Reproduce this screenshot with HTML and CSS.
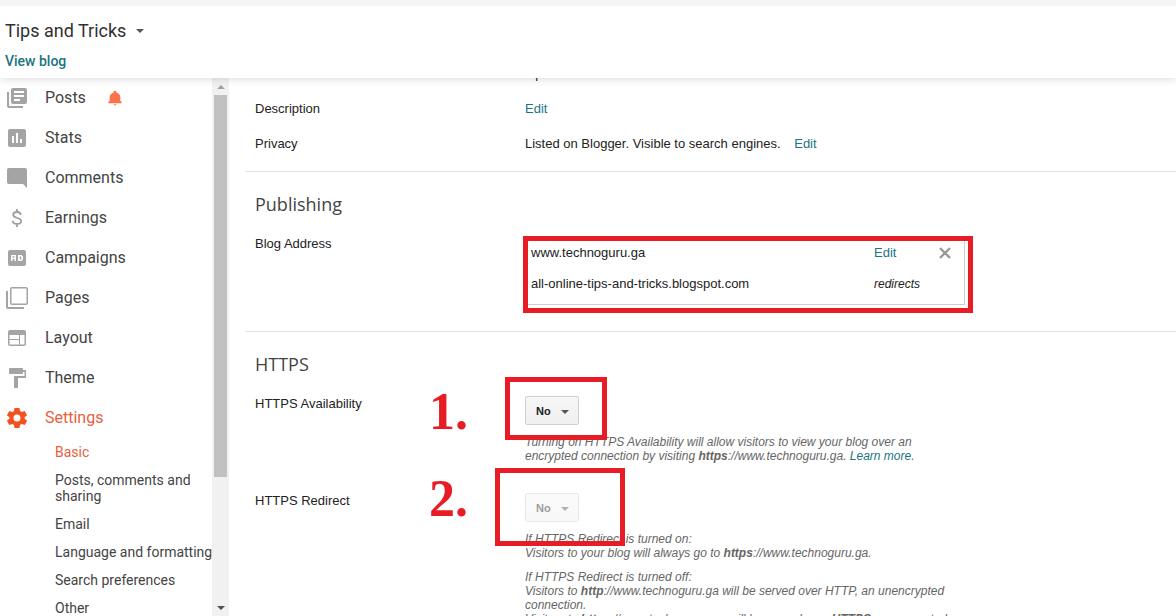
FILE: index.html
```
<!DOCTYPE html>
<html lang="en">

<head>
	<meta charset="utf-8">
	<title>Blogger: Tips and Tricks - Basic settings</title>
	<link rel="stylesheet" href="styles.css">
</head>

<body>

	<header class="topbar">
		<button type="button" class="blog-name">Tips and Tricks <span class="caret"></span></button>
		<a class="view-blog" href="#">View blog</a>
	</header>

	<div class="page">

		<nav class="sidebar">
			<ul class="menu">
				<li><a href="#">
					<svg class="icon" viewBox="0 0 24 24"><path d="M4 6H2v14c0 1.1.9 2 2 2h14v-2H4V6zm16-4H8c-1.1 0-2 .9-2 2v12c0 1.1.9 2 2 2h12c1.1 0 2-.9 2-2V4c0-1.1-.9-2-2-2zm-1 9H9V9h10v2zm-4 4H9v-2h6v2zm4-8H9V5h10v2z"/></svg>
					Posts
					<svg class="bell" viewBox="0 0 24 24"><path d="M12 23c1.200 0 2.200-.8 2.200-1.500H9.800c0 .7 1 1.500 2.200 1.500zM20 16v-5c0-3.600-2.500-6.400-6-7.200V3c0-1-.9-1.800-2-1.800S10 2 10 3v.8C6.500 4.600 4 7.400 4 11v5l-2 2.500v1.500h20v-1.500z"/></svg>
				</a></li>
				<li><a href="#">
					<svg class="icon" viewBox="0 0 24 24"><path d="M19 3H5c-1.100 0-2 .9-2 2v14c0 1.100.9 2 2 2h14c1.100 0 2-.9 2-2V5c0-1.100-.9-2-2-2zM9 17H7v-7h2v7zm4 0h-2V7h2v10zm4 0h-2v-4h2v4z"/></svg>
					Stats
				</a></li>
				<li><a href="#">
					<svg class="icon" viewBox="0 0 24 24"><path d="M22 4c0-1.100-.9-2-2-2H4c-1.100 0-2 .9-2 2v12c0 1.100.9 2 2 2h14l4 4z"/></svg>
					Comments
				</a></li>
				<li><a href="#">
					<svg class="icon" viewBox="0 0 24 24"><path d="M12 3v3M12 18v3M15.800 8.800C15.600 7 14.200 6 12 6 9.800 6 8.200 7.100 8.200 8.800c0 4.200 8 2.200 8 6.300 0 1.800-1.700 2.900-4.200 2.900-2.600 0-4.200-1.200-4.300-3.200" fill="none" stroke="currentColor" stroke-width="1.800"/></svg>
					Earnings
				</a></li>
				<li><a href="#">
					<svg class="icon" viewBox="0 0 24 24"><path fill-rule="evenodd" d="M5 4h14c1.100 0 2 .9 2 2v12c0 1.100-.9 2-2 2H5c-1.100 0-2-.9-2-2V6c0-1.100.9-2 2-2zM6 9v6h1.500v-2h2v2H11V9zm1.500 1.300h2v1.400h-2zM13 9v6h3.500l1.500-1.500v-3L16.500 9zm1.700 1.500h1.600v3h-1.600z"/></svg>
					Campaigns
				</a></li>
				<li><a href="#">
					<svg class="icon" viewBox="0 0 24 24"><path d="M3 5H1v16c0 1.100.9 2 2 2h16v-2H3V5zm18-4H7c-1.100 0-2 .9-2 2v14c0 1.100.9 2 2 2h14c1.100 0 2-.9 2-2V3c0-1.100-.9-2-2-2zm.5 16.500h-15v-15h15v15z"/></svg>
					Pages
				</a></li>
				<li><a href="#">
					<svg class="icon" viewBox="0 0 24 24"><path d="M19 4H5c-1.100 0-2 .9-2 2v12c0 1.100.9 2 2 2h14c1.100 0 2-.9 2-2V6c0-1.100-.9-2-2-2zm-5 14.500H4.500V14H14v4.500zm0-5.500H4.500V9H14v4zm5.500 5.500H15V9h4.500v9.500z"/></svg>
					Layout
				</a></li>
				<li><a href="#">
					<svg class="icon" viewBox="0 0 24 24"><path d="M18 4V3c0-.55-.45-1-1-1H5c-.55 0-1 .45-1 1v4c0 .55.45 1 1 1h12c.55 0 1-.45 1-1V6h1.500v4H9v11c0 .55.45 1 1 1h2c.55 0 1-.45 1-1v-9h8V4h-3z"/></svg>
					Theme
				</a></li>
				<li><a class="active" href="#">
					<svg class="icon" viewBox="0 0 24 24"><path fill-rule="evenodd" d="M9.500 2h5l.5 3.100 1.700 1 3-1.100 2.400 4.200-2.500 2v1.600l2.500 2-2.400 4.200-3-1.100-1.700 1-.5 3.100h-5L9 18.900l-1.700-1-3 1.100-2.400-4.200 2.500-2v-1.600l-2.500-2L4.300 5l3 1.100 1.700-1zM12 8.500a3.500 3.500 0 1 0 0 7 3.500 3.500 0 0 0 0-7z"/></svg>
					Settings
				</a>
					<ul class="submenu">
						<li><a class="active" href="#">Basic</a></li>
						<li><a href="#">Posts, comments and sharing</a></li>
						<li><a href="#">Email</a></li>
						<li><a href="#">Language and formatting</a></li>
						<li><a href="#">Search preferences</a></li>
						<li><a href="#">Other</a></li>
					</ul>
				</li>
			</ul>
		</nav>

		<div class="scrollbar">
			<span class="arrow up"></span>
			<span class="thumb"></span>
			<span class="arrow down"></span>
		</div>

		<main class="content">

			<section>
				<div class="row">
					<span>Title</span>
					<div class="field">Tips and Tricks <a class="edit" href="#">Edit</a></div>
				</div>
				<div class="row">
					<span>Description</span>
					<div class="field"><a href="#">Edit</a></div>
				</div>
				<div class="row">
					<span>Privacy</span>
					<div class="field">Listed on Blogger. Visible to search engines. <a class="edit" href="#">Edit</a></div>
				</div>
			</section>

			<section>
				<h2>Publishing</h2>
				<div class="row address-row">
					<span>Blog Address</span>
					<div class="field">
						<table class="addresses">
							<tr>
								<td>www.technoguru.ga</td>
								<td class="action"><a href="#">Edit</a></td>
								<td class="close">
									<button type="button" aria-label="Remove address">
										<svg viewBox="0 0 12 12"><path d="M1 1l10 10M11 1L1 11"/></svg>
									</button>
								</td>
							</tr>
							<tr>
								<td>all-online-tips-and-tricks.blogspot.com</td>
								<td class="action"><i>redirects</i></td>
								<td></td>
							</tr>
						</table>
						<div class="mark mark-address"></div>
					</div>
				</div>
			</section>

			<section>
				<h2>HTTPS</h2>
				<div class="row https-row">
					<label for="availability">HTTPS Availability</label>
					<div class="field">
						<div class="dropdown">
							<select id="availability"><option>No</option><option>Yes</option></select>
						</div>
						<p class="hint">Turning on HTTPS Availability will allow visitors to view your blog over an encrypted connection by visiting <b>https</b>://www.technoguru.ga. <a href="#">Learn more</a>.</p>
						<div class="mark mark-one"></div>
						<div class="step step-one">1.</div>
					</div>
				</div>
				<div class="row https-row">
					<label for="redirect">HTTPS Redirect</label>
					<div class="field">
						<div class="dropdown disabled">
							<select id="redirect" disabled><option>No</option><option>Yes</option></select>
						</div>
						<p class="hint">If HTTPS Redirect is turned on:<br>Visitors to your blog will always go to <b>https</b>://www.technoguru.ga.</p>
						<p class="hint">If HTTPS Redirect is turned off:<br>Visitors to <b>http</b>://www.technoguru.ga will be served over HTTP, an unencrypted connection.<br>Visitors to <b>https</b>://www.technoguru.ga will be served over <b>HTTPS</b>, an encrypted connection.</p>
						<div class="mark mark-two"></div>
						<div class="step step-two">2.</div>
					</div>
				</div>
			</section>

		</main>

	</div>

</body>

</html>
```
FILE: styles.css
```
* {
	box-sizing: border-box;
}

body {
	margin: 0;
	height: 100vh;
	display: flex;
	flex-direction: column;
	overflow: hidden;
	background: #fff;
	color: #222;
	font: 13px/15px "Liberation Sans", Arial, sans-serif;
}

a {
	color: #1a7482;
	text-decoration: none;
}

ul {
	list-style: none;
	margin: 0;
	padding: 0;
}

button {
	border: 0;
	padding: 0;
	background: none;
	cursor: pointer;
}

.topbar {
	flex: none;
	position: relative;
	z-index: 1;
	display: flex;
	flex-direction: column;
	align-items: flex-start;
	gap: 8px;
	padding: 12px 5px 8px;
	border-top: 6px solid #f5f5f5;
	background: #fff;
	box-shadow: 0 1px 8px rgba(0, 0, 0, .15);
	font-family: Roboto, sans-serif;
}

.blog-name {
	display: flex;
	align-items: center;
	gap: 10px;
	color: #303030;
	font: 18px/26px Roboto, sans-serif;
}

.view-blog {
	font-size: 14px;
	line-height: 18px;
	font-weight: 500;
}

.caret {
	border: 4px solid transparent;
	border-top-color: #555;
	border-bottom: 0;
}

.page {
	flex: 1;
	display: flex;
	min-height: 0;
	overflow: hidden;
}

/* left menu */
.sidebar {
	flex: none;
	width: 212px;
	font-family: Roboto, sans-serif;
}

.menu > li > a {
	display: flex;
	align-items: center;
	height: 40px;
	padding: 0 0 2px 5px;
	color: #444;
	font-size: 16px;
}

.menu .icon {
	width: 24px;
	height: 24px;
	margin: 2px 16px 0 0;
	color: #9e9e9e;
	fill: #a4a4a4;
}

.menu .active .icon {
	fill: #f4511e;
}

.menu a.active {
	color: #e8603c;
}

.bell {
	width: 16px;
	height: 16px;
	margin: 2px 0 0 21px;
	fill: #f9744c;
}

.submenu {
	padding-left: 55px;
	margin-right: -5px;
}

.submenu a {
	display: block;
	padding: 6px 0;
	color: #444;
	font-size: 14px;
	line-height: 16px;
}

.scrollbar {
	flex: none;
	width: 17px;
	display: flex;
	flex-direction: column;
	align-items: center;
	padding: 7px 0 6px;
	background: #f1f1f1;
}

.thumb {
	width: 13px;
	height: 382px;
	margin: 6px 0 auto;
	background: #c1c1c1;
}

.arrow {
	border: 4px solid transparent;
}

.up {
	border-top: 0;
	border-bottom-color: #a3a3a3;
}

.down {
	border-bottom: 0;
	border-top-color: #505050;
}

/* settings */
.content {
	flex: 1;
	margin: -22px 0 0 16px;
}

section {
	padding-bottom: 10px;
}

section + section {
	padding-bottom: 0;
	border-top: 1px solid #e5e5e5;
}

h2 {
	margin: 0;
	padding: 20px 10px 10px;
	color: #444;
	font: 18px/24px "Open Sans", sans-serif;
}

.row {
	display: grid;
	grid-template-columns: 270px 1fr;
	padding: 10px;
}

.field {
	position: relative;
	max-width: 440px;
}

.edit {
	margin-left: 10px;
}

.address-row {
	padding-bottom: 26px;
}

.addresses {
	width: 100%;
	table-layout: fixed;
	padding: 0 5px 5px;
	border: 1px solid #ccc;
	border-spacing: 0;
}

.addresses td {
	height: 31px;
	padding: 0;
}

.addresses i {
	font-size: 12px;
}

.addresses .action {
	width: 65px;
}

.addresses .close {
	width: 20px;
}

.close button {
	display: block;
}

.close svg {
	display: block;
	width: 12px;
	height: 12px;
	stroke: #999;
	stroke-width: 2.4;
}

.https-row {
	padding-bottom: 20px;
}

.dropdown {
	position: relative;
	width: 54px;
	margin-bottom: 10px;
}

.dropdown::after {
	content: "";
	position: absolute;
	top: 14px;
	right: 10px;
	border: 4px solid transparent;
	border-top-color: #555;
	border-bottom: 0;
	pointer-events: none;
}

.dropdown select {
	display: block;
	appearance: none;
	width: 100%;
	height: 29px;
	padding: 0 10px;
	border: 1px solid #d0d0d0;
	border-radius: 2px;
	background: linear-gradient(#f6f6f6, #f0f0f0);
	color: #222;
	font: bold 11px "Liberation Sans", Arial, sans-serif;
}

.dropdown.disabled {
	opacity: .45;
}

.dropdown select:disabled {
	opacity: 1;
}

.hint {
	margin: 0;
	color: #666;
	font-size: 12px;
	line-height: 14px;
	font-style: italic;
}

.hint + .hint {
	margin-top: 10px;
}

/* red frames and numbers drawn over the settings */
.mark {
	position: absolute;
	border: 5px solid #e81c24;
}

.mark-address {
	top: 0;
	left: -2px;
	width: 450px;
	height: 77px;
}

.mark-one {
	top: -19px;
	left: -20px;
	width: 102px;
	height: 63px;
}

.mark-two {
	top: -25px;
	left: -30px;
	width: 130px;
	height: 78px;
}

.step {
	position: absolute;
	left: -96px;
	color: #e81c24;
	font: bold 52px/52px "Liberation Serif", "Times New Roman", serif;
}

.step-one {
	top: -10px;
}

.step-two {
	top: -20px;
}
```
